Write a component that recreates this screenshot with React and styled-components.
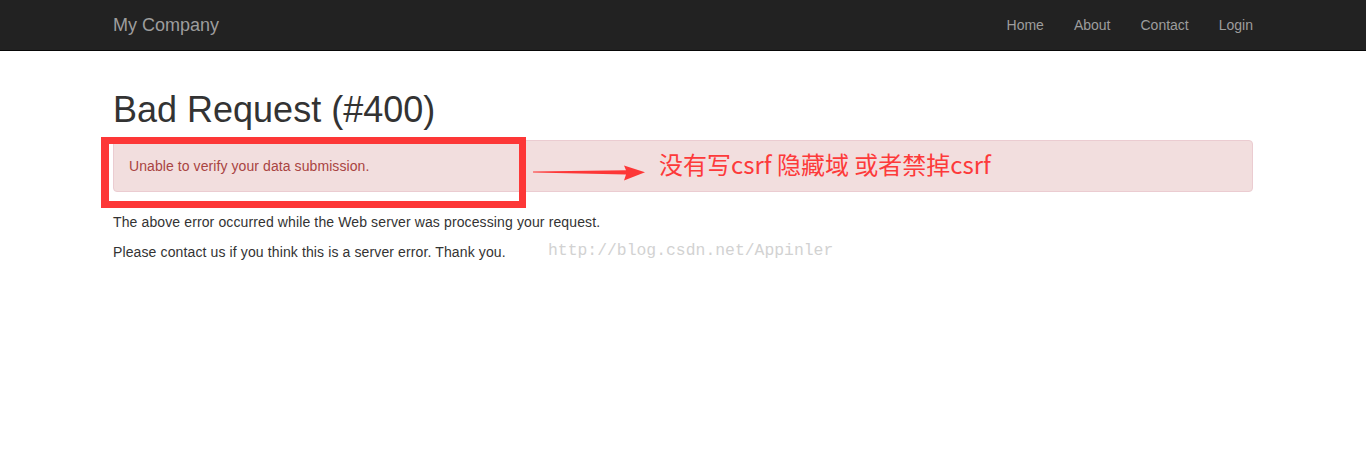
import styled, { createGlobalStyle } from 'styled-components';

const GlobalStyle = createGlobalStyle`
  html, body {
    margin: 0;
    padding: 0;
    background: #fff;
  }
  body {
    font-family: "Liberation Sans", Arial, Helvetica, sans-serif;
    font-size: 14px;
    line-height: 20px;
    color: #333;
  }
  * {
    box-sizing: border-box;
  }
`;

const Navbar = styled.nav`
  height: 51px;
  background: #222;
  border-bottom: 1px solid #080808;
`;
const NavInner = styled.div`
  width: 1140px;
  margin: 0 auto;
  height: 50px;
  display: flex;
  align-items: center;
  justify-content: space-between;
`;
const Brand = styled.a`
  font-size: 18px;
  line-height: 20px;
  color: #9d9d9d;
  text-decoration: none;
`;
const NavList = styled.ul`
  display: flex;
  list-style: none;
  margin: 0 -15px 0 0;
  padding: 0;
`;
const NavLink = styled.a`
  display: block;
  padding: 15px;
  line-height: 20px;
  color: #9d9d9d;
  text-decoration: none;
`;

const Container = styled.div`
  width: 1140px;
  margin: 0 auto;
  padding-top: 19px;
  display: flex;
  flex-direction: column;
`;
const Title = styled.h1`
  font-size: 36px;
  font-weight: 500;
  line-height: 1.1;
  margin: 20px 0 10px;
  color: #333;
`;
const AlertWrap = styled.div`
  position: relative;
  margin-bottom: 20px;
`;
const Alert = styled.div`
  padding: 15px;
  border: 1px solid #ebccd1;
  border-radius: 4px;
  background: #f2dede;
  color: #a94442;
  letter-spacing: 0.08px;
`;
/* annotation drawn over the screenshot */
const RedBox = styled.div`
  position: absolute;
  left: -12px;
  top: -3px;
  width: 425px;
  height: 71px;
  border: 7px solid #fd3737;
  border-left-width: 8px;
`;
const Arrow = styled.svg`
  position: absolute;
  left: 417px;
  top: 19px;
`;
const Note = styled.span`
  position: absolute;
  left: 546px;
  top: 9px;
  font-family: "Noto Sans CJK SC", "Liberation Sans", sans-serif;
  font-size: 24px;
  line-height: 30px;
  color: #fd3a3a;
  white-space: nowrap;
`;
const TextBlock = styled.div`
  position: relative;
`;
const Para = styled.p`
  margin: 0 0 10px;
  letter-spacing: 0.12px;
`;
const Watermark = styled.span`
  position: absolute;
  left: 435px;
  top: 29px;
  font-family: "Liberation Mono", monospace;
  font-size: 16.4px;
  line-height: 20px;
  color: #d2d2d2;
  white-space: nowrap;
`;

const links = ['Home', 'About', 'Contact', 'Login'];

export default function App() {
  return (
    <>
      <GlobalStyle />
      <Navbar>
        <NavInner>
          <Brand href="#">My Company</Brand>
          <NavList>
            {links.map((l) => (
              <li key={l}>
                <NavLink href="#">{l}</NavLink>
              </li>
            ))}
          </NavList>
        </NavInner>
      </Navbar>
      <Container>
        <Title>Bad Request (#400)</Title>
        <AlertWrap>
          <Alert>Unable to verify your data submission.</Alert>
          <RedBox />
          <Arrow width="120" height="25" viewBox="0 0 120 25">
            <polygon
              points="3,12.6 96,11.2 94,6.5 115,13.3 94,21.5 96,15.6 3,13.4"
              fill="#fd3737"
            />
          </Arrow>
          <Note>没有写csrf 隐藏域 或者禁掉csrf</Note>
        </AlertWrap>
        <TextBlock>
          <Para>The above error occurred while the Web server was processing your request.</Para>
          <Para>Please contact us if you think this is a server error. Thank you.</Para>
          <Watermark>http://blog.csdn.net/Appinler</Watermark>
        </TextBlock>
      </Container>
    </>
  );
}
